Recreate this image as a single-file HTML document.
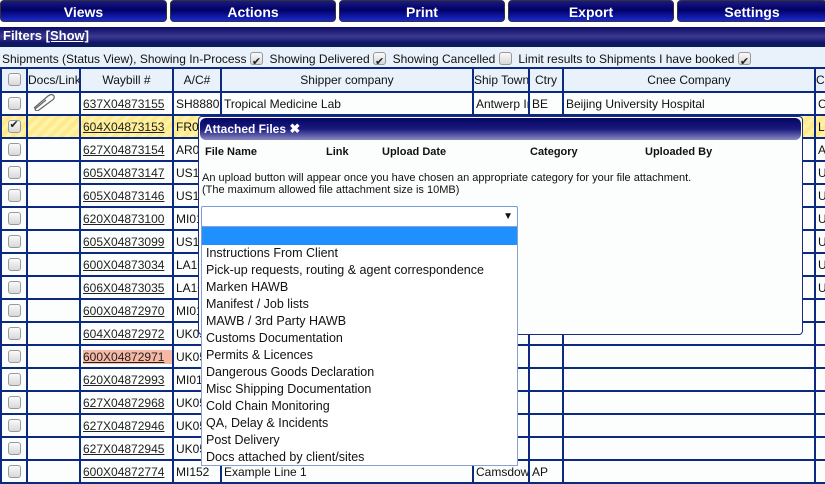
<!DOCTYPE html>
<html><head><meta charset="utf-8"><style>
*{box-sizing:border-box}
body{margin:0;width:825px;height:471px;overflow:hidden;background:#fff;font-family:"Liberation Sans",Tahoma,sans-serif;font-size:12px;color:#111;position:relative}
.btn{position:absolute;top:0;height:22px;border-radius:4px;background:linear-gradient(#1a1a80,#000066 45%,#1a2ad0);color:#fff;font-weight:bold;font-size:14px;text-align:center;line-height:22px;border:1px solid #333}
.fbar{position:absolute;left:0;top:27px;width:825px;height:20px;background:linear-gradient(#0a0a66,#3a3a90 60%,#10106a);border-bottom:4px solid #0b1a60}
.fbar span{position:absolute;left:3px;top:1px;color:#fff;font-weight:bold;font-size:13px}
.frow{position:absolute;left:0;top:47px;width:825px;height:22px;background:#e9f2fb;line-height:24px;font-size:12px;padding-left:2px;white-space:nowrap}
.cb{display:inline-block;width:13px;height:13px;border:1px solid #999;border-radius:3px;background:linear-gradient(#fafafa,#d8d8d8);vertical-align:-2px;position:relative}
.cb.on::after{content:"✔";position:absolute;left:1px;top:-3px;font-size:11px;color:#222}
table{position:absolute;left:0;top:67px;width:833px;border-collapse:collapse;table-layout:fixed;background:#fcfefe}
td{border:2px solid #0c2a80;height:23px;padding:0;text-indent:2px;white-space:nowrap;overflow:hidden;font-size:12px}
tr.h td{background:#e9f2fb;text-align:center;height:24px;text-indent:0}
td a{color:#222;text-decoration:underline}
tr.y td{background:repeating-linear-gradient(135deg,#fff3a8 0 4px,#ffe98a 4px 8px)}
td.c{text-align:center;text-indent:0}
.dlg{position:absolute;left:198px;top:116px;width:605px;height:219px;background:#fcfefe;border:1px solid #1c2a80;border-radius:4px;font-size:11px}
.dlg .t{height:22px;margin:1px;border-radius:6px;background:linear-gradient(#050560,#1a1a80 50%,#8a8ac0);color:#fff;font-weight:bold;font-size:12px;line-height:22px;padding-left:4px}
.hd{position:absolute;top:29px;font-weight:bold;font-size:11px}
.sel{position:absolute;left:201px;top:206px;width:317px;height:21px;border:1px solid #7a9ad8;border-radius:2px;background:#fff;font-size:10px;text-align:right;padding-right:4px;line-height:19px}
.lst{position:absolute;left:201px;top:226px;width:317px;height:240px;border:1px solid #8aa0d0;background:#fff;font-size:12.5px}
.lst div{height:17px;line-height:17px;padding-left:4px;white-space:nowrap}
.lst .hi{background:#1e90ff;height:18px}
</style></head><body>
<div class="btn" style="left:0;width:167px">Views</div>
<div class="btn" style="left:170px;width:166px">Actions</div>
<div class="btn" style="left:339px;width:166px">Print</div>
<div class="btn" style="left:508px;width:166px">Export</div>
<div class="btn" style="left:677px;width:150px">Settings</div>
<div class="fbar"><span>Filters <u>[Show]</u></span></div>
<div class="frow">Shipments (Status View), Showing In-Process <span class="cb on"></span>&nbsp; Showing Delivered <span class="cb on"></span>&nbsp; Showing Cancelled <span class="cb"></span>&nbsp; Limit results to Shipments I have booked <span class="cb on"></span></div>
<table>
<colgroup><col style="width:26px"><col style="width:53px"><col style="width:93px"><col style="width:48px"><col style="width:252px"><col style="width:56px"><col style="width:34px"><col style="width:252px"><col style="width:19px"></colgroup>
<tr class="h"><td class="c"><span class="cb"></span></td><td>Docs/Link</td><td>Waybill #</td><td>A/C#</td><td>Shipper company</td><td style="text-align:left">Ship Town</td><td>Ctry</td><td>Cnee Company</td><td style="text-align:left">C</td></tr>
<tr><td class="c"><span class="cb"></span></td><td><svg width="26" height="18" viewBox="0 0 26 18"><path d="M4 15 L18 3 Q22 0 24 3 Q25 6 21 8 L9 17 Q6 19 5 16 L16 7" fill="none" stroke="#666" stroke-width="1.2"/></svg></td><td><a>637X04873155</a></td><td>SH8880</td><td>Tropical Medicine Lab</td><td>Antwerp In</td><td>BE</td><td>Beijing University Hospital</td><td>C</td></tr>
<tr class="y"><td class="c"><span class="cb on"></span></td><td></td><td><a>604X04873153</a></td><td>FR08</td><td></td><td></td><td></td><td></td><td>LI</td></tr>
<tr><td class="c"><span class="cb"></span></td><td></td><td><a>627X04873154</a></td><td>AR00</td><td></td><td></td><td></td><td></td><td>Al</td></tr>
<tr><td class="c"><span class="cb"></span></td><td></td><td><a>605X04873147</a></td><td>US10</td><td></td><td></td><td></td><td></td><td>U</td></tr>
<tr><td class="c"><span class="cb"></span></td><td></td><td><a>605X04873146</a></td><td>US10</td><td></td><td></td><td></td><td></td><td>U</td></tr>
<tr><td class="c"><span class="cb"></span></td><td></td><td><a>620X04873100</a></td><td>MI01</td><td></td><td></td><td></td><td></td><td>U</td></tr>
<tr><td class="c"><span class="cb"></span></td><td></td><td><a>605X04873099</a></td><td>US10</td><td></td><td></td><td></td><td></td><td>U</td></tr>
<tr><td class="c"><span class="cb"></span></td><td></td><td><a>600X04873034</a></td><td>LA10</td><td></td><td></td><td></td><td></td><td>U</td></tr>
<tr><td class="c"><span class="cb"></span></td><td></td><td><a>606X04873035</a></td><td>LA10</td><td></td><td></td><td></td><td></td><td>U</td></tr>
<tr><td class="c"><span class="cb"></span></td><td></td><td><a>600X04872970</a></td><td>MI01</td><td></td><td></td><td></td><td></td><td></td></tr>
<tr><td class="c"><span class="cb"></span></td><td></td><td><a>604X04872972</a></td><td>UK05</td><td></td><td></td><td></td><td></td><td></td></tr>
<tr><td class="c"><span class="cb"></span></td><td></td><td><a style="background:#f7b9a6;padding-right:8px">600X04872971</a></td><td>UK05</td><td></td><td></td><td></td><td></td><td></td></tr>
<tr><td class="c"><span class="cb"></span></td><td></td><td><a>620X04872993</a></td><td>MI01</td><td></td><td></td><td></td><td></td><td></td></tr>
<tr><td class="c"><span class="cb"></span></td><td></td><td><a>627X04872968</a></td><td>UK05</td><td></td><td></td><td></td><td></td><td></td></tr>
<tr><td class="c"><span class="cb"></span></td><td></td><td><a>627X04872946</a></td><td>UK05</td><td></td><td></td><td></td><td></td><td></td></tr>
<tr><td class="c"><span class="cb"></span></td><td></td><td><a>627X04872945</a></td><td>UK05</td><td></td><td></td><td></td><td></td><td></td></tr>
<tr><td class="c"><span class="cb"></span></td><td></td><td><a>600X04872774</a></td><td>MI152</td><td>Example Line 1</td><td>Camsdows</td><td>AP</td><td></td><td></td></tr>
</table>
<div class="dlg"><div class="t">Attached Files <span style="font-size:13px">✖</span></div>
<div class="hd" style="left:6px">File Name</div><div class="hd" style="left:127px">Link</div><div class="hd" style="left:183px">Upload Date</div><div class="hd" style="left:331px">Category</div><div class="hd" style="left:446px">Uploaded By</div>
<div style="position:absolute;left:3px;top:55px;line-height:12px">An upload button will appear once you have chosen an appropriate category for your file attachment.<br>(The maximum allowed file attachment size is 10MB)</div>
</div>
<div class="sel">▼</div>
<div class="lst"><div class="hi"></div><div>Instructions From Client</div><div>Pick-up requests, routing &amp; agent correspondence</div><div>Marken HAWB</div><div>Manifest / Job lists</div><div>MAWB / 3rd Party HAWB</div><div>Customs Documentation</div><div>Permits &amp; Licences</div><div>Dangerous Goods Declaration</div><div>Misc Shipping Documentation</div><div>Cold Chain Monitoring</div><div>QA, Delay &amp; Incidents</div><div>Post Delivery</div><div>Docs attached by client/sites</div></div>
</body></html>
